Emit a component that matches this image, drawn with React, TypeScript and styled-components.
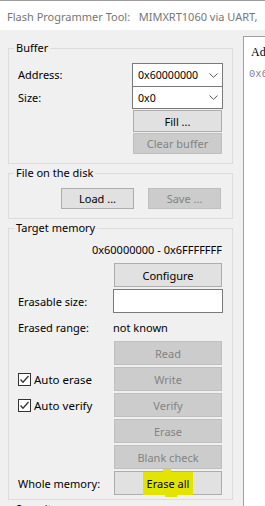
import React from 'react';
import styled, { createGlobalStyle } from 'styled-components';

const UI_FONT = '"Segoe UI", "Noto Sans", sans-serif';

const GlobalStyle = createGlobalStyle`
  html, body {
    margin: 0;
    padding: 0;
    background: #f0f0f0;
  }
  body {
    font-family: ${UI_FONT};
    font-size: 11px;
    color: #000;
  }
`;

interface IButtonProps {
  disabled?: boolean;
  height?: number;
  label: React.ReactNode;
}

const ToolButton: React.FC<IButtonProps> = ({ disabled, height, label }) => (
  <Button disabled={disabled} $disabled={disabled} $height={height}>
    {label}
  </Button>
);

const Combo: React.FC<{ value: string; height: number }> = ({ value, height }) => (
  <ComboBox $height={height}>
    <span>{value}</span>
    <svg width="9" height="5" viewBox="0 0 9 5">
      <polyline points="0.5,0.5 4.5,4.3 8.5,0.5" fill="none" stroke="#5a5a5a" strokeWidth="1" />
    </svg>
  </ComboBox>
);

const Check: React.FC<{ label: string }> = ({ label }) => (
  <CheckLabel>
    <CheckBox>
      <svg width="11" height="11" viewBox="0 0 11 11">
        <polyline points="1.5,5.5 4,8.2 9.5,2" fill="none" stroke="#333" strokeWidth="1.3" />
      </svg>
    </CheckBox>
    {label}
  </CheckLabel>
);

export default function App() {
  return (
    <>
      <GlobalStyle />
      <Window>
        <TitleBar>{'Flash Programmer Tool:   MIMXRT1060 via UART,'}</TitleBar>
        <Body>
          <SidePanel>
            <Group $top={7} $bottom={9}>
              <Legend>Buffer</Legend>
              <BufferGrid>
                <FieldLabel>Address:</FieldLabel>
                <Combo value="0x60000000" height={24} />
                <FieldLabel>Size:</FieldLabel>
                <Combo value="0x0" height={23} />
                <Spacer />
                <ToolButton height={22} label="Fill ..." />
                <Spacer />
                <ToolButton disabled height={21} label="Clear buffer" />
              </BufferGrid>
            </Group>

            <Group $top={7} $bottom={9}>
              <Legend>File on the disk</Legend>
              <FileRow>
                <ToolButton height={21} label="Load ..." />
                <ToolButton disabled height={21} label="Save ..." />
              </FileRow>
            </Group>

            <Group $top={1} $bottom={4}>
              <Legend>Target memory</Legend>
              <TargetGrid>
                <RangeText>0x60000000 - 0x6FFFFFFF</RangeText>
                <Spacer />
                <ToolButton label="Configure" />
                <FieldLabel>Erasable size:</FieldLabel>
                <TextInput />
                <FieldLabel>Erased range:</FieldLabel>
                <ValueText>not known</ValueText>
                <Spacer />
                <ToolButton disabled label="Read" />
                <Check label="Auto erase" />
                <ToolButton disabled label="Write" />
                <Check label="Auto verify" />
                <ToolButton disabled label="Verify" />
                <Spacer />
                <ToolButton disabled label="Erase" />
                <Spacer />
                <ToolButton disabled label="Blank check" />
                <FieldLabel>Whole memory:</FieldLabel>
                <ToolButton label={<Marker>Erase all</Marker>} />
              </TargetGrid>
            </Group>

            <Group $top={7} $bottom={9}>
              <Legend>Security</Legend>
              <Spacer />
            </Group>
          </SidePanel>

          <DataView>
            <ColumnHeader>Ad</ColumnHeader>
            <DataLine>0x6</DataLine>
          </DataView>
        </Body>
      </Window>
    </>
  );
}

const Window = styled.div`
  width: 265px;
  height: 506px;
  overflow: hidden;
  display: flex;
  flex-direction: column;
`;

const TitleBar = styled.div`
  height: 27px;
  flex: none;
  border-top: 1px solid #9c9c9c;
  background: #fff;
  color: #767676;
  padding: 2px 0 0 7px;
  line-height: 27px;
  font-size: 11px;
  white-space: pre;
  overflow: hidden;
`;

const Body = styled.div`
  flex: 1;
  display: flex;
  align-items: flex-start;
  min-height: 0;
`;

const SidePanel = styled.div`
  width: 243px;
  flex: none;
  padding-top: 10px;
  display: flex;
  flex-direction: column;
  gap: 1px;
`;

const Group = styled.fieldset<{ $top: number; $bottom: number }>`
  margin: 0 0 0 8px;
  width: 225px;
  box-sizing: border-box;
  padding: ${(p) => p.$top}px 9px ${(p) => p.$bottom}px 9px;
  border: 1px solid #dcdcdc;
  min-width: 0;
`;

const Legend = styled.legend`
  padding: 0 2px;
  margin-left: -4px;
  line-height: 16px;
`;

const BufferGrid = styled.div`
  display: grid;
  grid-template-columns: 1fr 91px;
  grid-template-rows: 23px 23px 23px 22px;
  align-items: start;
  & > button {
    align-self: end;
  }
`;

const FileRow = styled.div`
  display: flex;
  justify-content: flex-end;
  gap: 12px;
  padding-right: 1px;
  & > button {
    width: 73px;
  }
`;

const TargetGrid = styled.div`
  display: grid;
  grid-template-columns: 1fr 110px;
  grid-auto-rows: 24px;
  row-gap: 2px;
  align-items: center;
`;

const Spacer = styled.div``;

const FieldLabel = styled.div`
  white-space: nowrap;
  align-self: center;
`;

const RangeText = styled.div`
  grid-column: 1 / 3;
  text-align: right;
  padding-right: 1px;
`;

const ValueText = styled.div`
  white-space: nowrap;
`;

const Button = styled.button<{ $disabled?: boolean; $height?: number }>`
  height: ${(p) => p.$height ?? 24}px;
  margin: 0 1px;
  padding: 0;
  box-sizing: border-box;
  font-family: ${UI_FONT};
  font-size: 11px;
  border: 1px solid ${(p) => (p.$disabled ? '#bfbfbf' : '#adadad')};
  background: ${(p) => (p.$disabled ? '#cccccc' : '#e1e1e1')};
  color: ${(p) => (p.$disabled ? '#838383' : '#000')};
  border-radius: 0;
  overflow: visible;
  white-space: nowrap;
`;

const ComboBox = styled.div<{ $height: number }>`
  height: ${(p) => p.$height}px;
  box-sizing: border-box;
  border: 1px solid #7a7a7a;
  background: #fff;
  display: flex;
  align-items: center;
  justify-content: space-between;
  padding: 0 4px 0 5px;
  font-size: 10.6px;
`;

const TextInput = styled.div`
  height: 100%;
  box-sizing: border-box;
  border: 1px solid #7a7a7a;
  background: #fff;
`;

const CheckLabel = styled.label`
  display: flex;
  align-items: center;
  gap: 3px;
  white-space: nowrap;
  font-size: 11.5px;
`;

const CheckBox = styled.span`
  width: 13px;
  height: 13px;
  box-sizing: border-box;
  border: 1px solid #333;
  background: #fff;
  display: flex;
  align-items: center;
  justify-content: center;
`;

const Marker = styled.span`
  position: relative;
  display: inline-block;
  background: #e4e404;
  padding: 0 4px;
  line-height: 23px;
  &::before {
    content: '';
    position: absolute;
    top: -3px;
    left: 20px;
    width: 8px;
    height: 3px;
    background: #e4e404;
  }
  &::after {
    content: '';
    position: absolute;
    bottom: -2px;
    left: 22px;
    width: 12px;
    height: 2px;
    background: #e4e404;
  }
`;

const DataView = styled.div`
  flex: 1;
  align-self: stretch;
  margin-top: 6px;
  background: #fff;
  border-left: 1px solid #a0a0a0;
  border-top: 1px solid #a0a0a0;
  padding: 8px 0 0 5px;
  overflow: hidden;
  white-space: nowrap;
`;

const ColumnHeader = styled.div`
  font-family: "Liberation Serif", serif;
  font-size: 12px;
  line-height: 14px;
  padding-left: 2px;
`;

const DataLine = styled.div`
  font-family: "Liberation Mono", monospace;
  font-size: 10.5px;
  color: #8a8094;
  margin-top: 9px;
`;
